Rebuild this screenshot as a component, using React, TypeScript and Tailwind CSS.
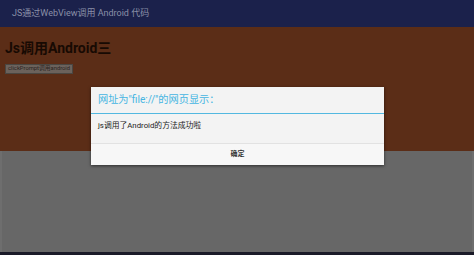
export default function App() {
  const font = { fontFamily: '"Roboto", "Noto Sans CJK SC", sans-serif' };
  return (
    <div className="relative flex h-[255px] w-[474px] flex-col overflow-hidden bg-[#676767]" style={font}>
      {/* action bar */}
      <div className="flex h-[27px] items-center bg-[#1b214b] pl-[12px] shadow-[0_1px_1px_rgba(0,0,0,0.4)]">
        <span className="text-[9px] leading-none text-[#8a90a8]">JS通过WebView调用 Android 代码</span>
      </div>

      {/* webview content */}
      <div className="flex h-[124px] flex-col bg-[#5b2d17] px-[5px] pt-[12px]">
        <h1 className="text-[14px] font-bold leading-[18px] text-[#170a03]">Js调用Android三</h1>
        <div className="mt-[7px] flex">
          <div className="flex h-[10px] items-center border border-[#4a4641] bg-[#6b625c] px-[2px] text-[5.8px] leading-none text-[#2c241f]">
            clickPrompt调用android
          </div>
        </div>
      </div>

      <div className="flex-1 border-x-2 border-[#6e6e6e] bg-[#676767]" />
      <div className="h-[3px] bg-[#1a1a28]" />

      {/* prompt dialog */}
      <div className="absolute left-[91px] top-[87px] flex w-[293px] flex-col bg-[#f3f3f3] shadow-[0_1px_3px_rgba(0,0,0,0.55)]">
        <div className="flex h-[27px] items-center border-b-[1.5px] border-[#52b8e0] pl-[7px]">
          <span className="text-[10.2px] leading-none text-[#45b5e2]">网址为"file://"的网页显示：</span>
        </div>
        <div className="flex h-[30px] items-start border-b border-[#e2e2e2] pl-[7px] pt-[8px]">
          <span className="text-[7.8px] leading-none text-[#222]">js调用了Android的方法成功啦</span>
        </div>
        <div className="flex h-[21px] items-center justify-center bg-[#f7f7f7]">
          <span className="text-[7px] font-bold leading-none text-[#333]">确定</span>
        </div>
      </div>
    </div>
  );
}
